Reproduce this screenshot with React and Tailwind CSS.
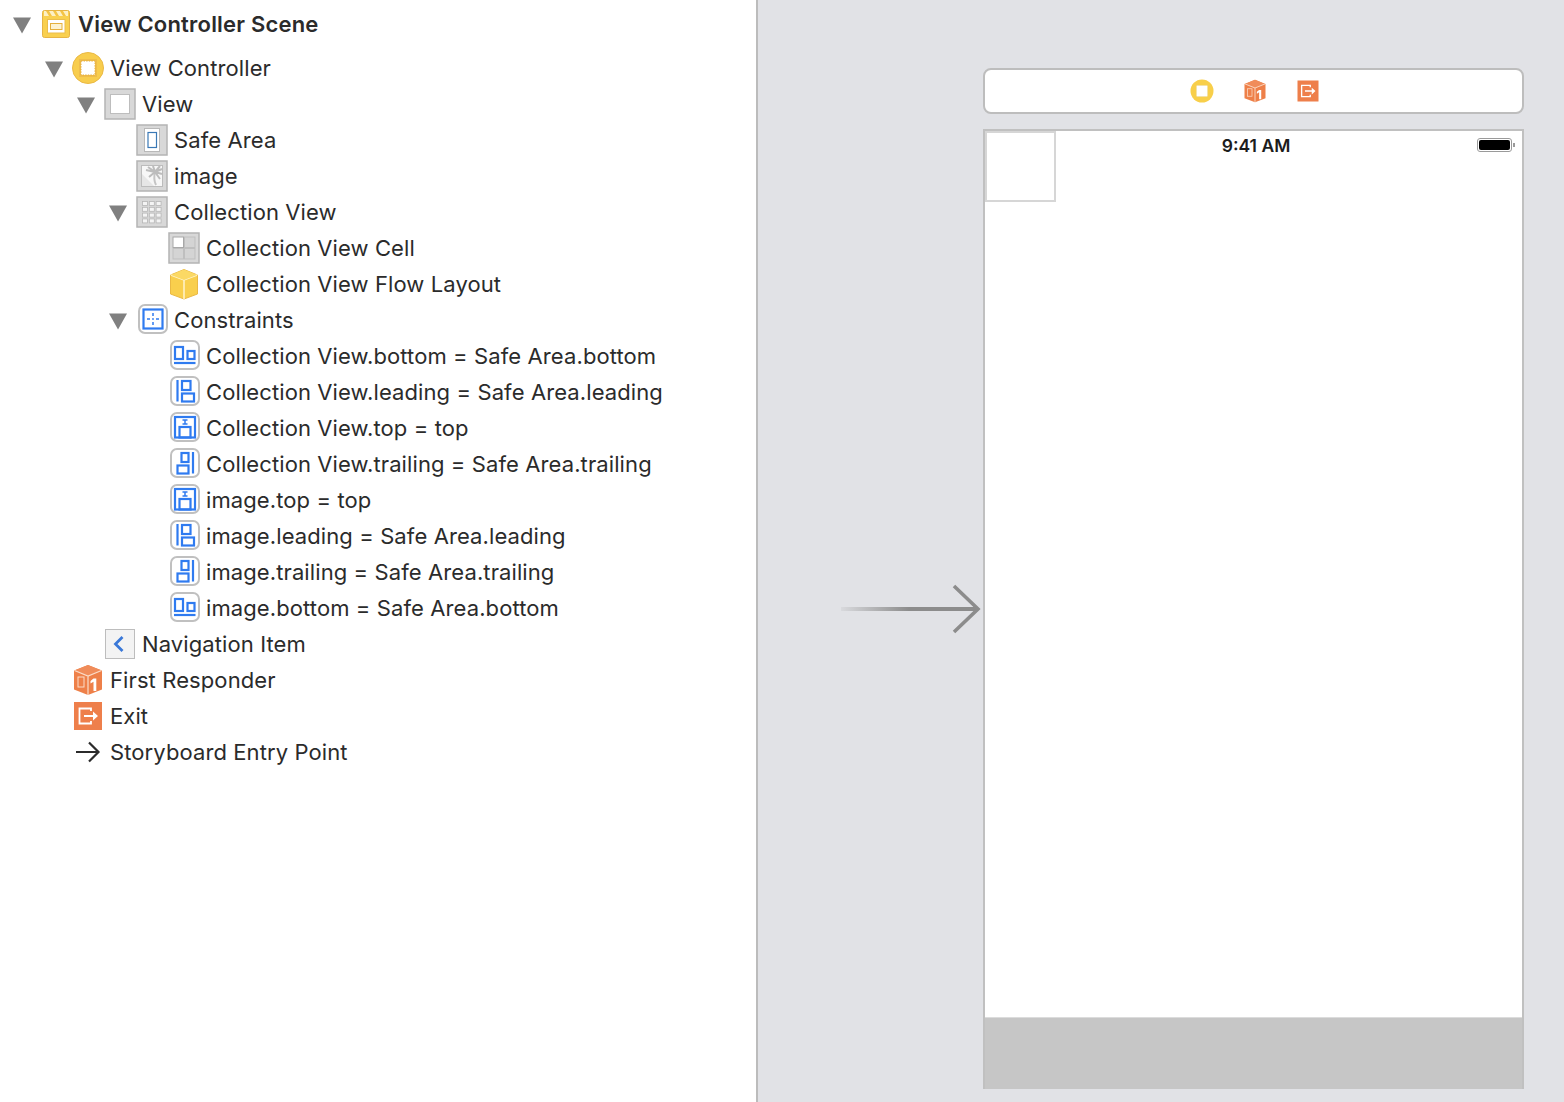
import { Fragment } from "react"

const BLUE = "#2f7bf0"
const FONT = "font-['Inter','Liberation_Sans',sans-serif]"

function Triangle() {
  return (
    <svg width="32" height="32" viewBox="0 0 32 32" className="shrink-0">
      <path d="M7 9.500h18l-9 16z" fill="#808080" />
    </svg>
  )
}

function GrayBox({ children }) {
  return (
    <svg width="32" height="32" viewBox="0 0 32 32">
      <rect x="1" y="1" width="30" height="30" fill="#d8d8d8" stroke="#b4b4b4" strokeWidth="1.500" />
      {children}
    </svg>
  )
}

function SceneIcon() {
  return (
    <svg width="32" height="32" viewBox="0 0 32 32">
      <rect x="2.500" y="2.500" width="27" height="27" rx="2" fill="#f9d04f" stroke="#e6b445" />
      <path d="M4 3h24v5H4z" fill="#fdf0c4" />
      <path d="M6 3l3 5h3L9 3zM13 3l3 5h3l-3-5zM20 3l3 5h3l-3-5z" fill="#f4c445" />
      <rect x="7.500" y="11.500" width="17.500" height="13.500" fill="#fff" stroke="#ebbd4c" />
      <rect x="10.500" y="15.500" width="11.500" height="6" fill="#fdf3d0" stroke="#e5b03c" />
    </svg>
  )
}

function ControllerIcon({ small }) {
  if (small) {
    return (
      <svg width="24" height="24" viewBox="0 0 24 24">
        <circle cx="12" cy="12" r="11.500" fill="#f8cf4a" />
        <rect x="6.500" y="6.500" width="11" height="11" rx="1" fill="#fff" stroke="#f3e2a8" />
      </svg>
    )
  }
  return (
    <svg width="32" height="32" viewBox="0 0 32 32">
      <circle cx="16" cy="16" r="15.500" fill="#f8cd4d" stroke="#eab945" />
      <rect x="7" y="7" width="18" height="18" fill="#efbd4b" />
      <rect x="9" y="9" width="14" height="14" fill="#fff" />
      <rect x="9" y="9" width="14" height="14" fill="none" stroke="#e5ad3c" strokeDasharray="1.400 1.200" />
    </svg>
  )
}

function ViewIcon() {
  return (
    <GrayBox>
      <rect x="6.500" y="6.500" width="19" height="19" fill="#fff" stroke="#bdbdbd" />
    </GrayBox>
  )
}

function SafeAreaIcon() {
  return (
    <GrayBox>
      <rect x="8.500" y="4.500" width="15" height="23" fill="#fff" stroke="#b8b8b8" />
      <rect x="12" y="8.500" width="8.500" height="15" fill="#fff" stroke="#3a78b5" strokeWidth="1.200" />
    </GrayBox>
  )
}

function ImageIcon() {
  return (
    <GrayBox>
      <rect x="5.500" y="5.500" width="21" height="21" fill="#f7f7f7" stroke="#bcbcbc" />
      <path d="M6 14l12 12H6z" fill="#e6e6e6" />
      <path d="M19 12c-1 4-1 9 1 13" fill="none" stroke="#c4c4c4" strokeWidth="2" />
      <path d="M19 12L10 10M19 12L12 7M19 12L17 6M19 12L24 6M19 12L26 9M19 12L26 14M19 12L24 19M19 12L13 17" fill="none" stroke="#bcbcbc" strokeWidth="2" />
    </GrayBox>
  )
}

function CollectionIcon() {
  const cells = []
  for (let r = 0; r < 4; r++) {
    for (let c = 0; c < 3; c++) {
      cells.push(<rect key={`${r}${c}`} x={6.500 + c * 6.800} y={5.500 + r * 5.800} width="5" height="4" fill="#f4f4f4" stroke="#b6b6b6" strokeWidth="0.800" />)
    }
  }
  return <GrayBox>{cells}</GrayBox>
}

function CellIcon() {
  return (
    <GrayBox>
      <rect x="5" y="5" width="10.500" height="10.500" fill="#fff" stroke="#a8a8a8" />
      <rect x="16.500" y="5" width="10.500" height="10.500" fill="#d4d4d4" stroke="#bfbfbf" />
      <rect x="5" y="16.500" width="10.500" height="10.500" fill="#d4d4d4" stroke="#bfbfbf" />
      <rect x="16.500" y="16.500" width="10.500" height="10.500" fill="#d4d4d4" stroke="#bfbfbf" />
    </GrayBox>
  )
}

function LayoutIcon() {
  return (
    <svg width="32" height="32" viewBox="0 0 32 32">
      <path d="M16 1.500L29.500 7v19L16 31 2.500 26V7z" fill="#f9cf4d" stroke="#eab945" />
      <path d="M3 7l13 5 13-5M16 12v19" fill="none" stroke="#fff4cc" strokeWidth="1.500" />
      <path d="M3 7l13-5.500L29 7l-13 5z" fill="#fbd964" />
    </svg>
  )
}

function ConstraintBox({ children }) {
  return (
    <svg width="32" height="32" viewBox="0 0 32 32">
      <rect x="3" y="1" width="28" height="28" rx="6" fill="#fff" stroke="#c0c0c0" strokeWidth="2" />
      <g fill="none" stroke={BLUE} strokeWidth="2.200">{children}</g>
    </svg>
  )
}

function ConstraintsIcon() {
  return (
    <svg width="32" height="32" viewBox="0 0 32 32">
      <rect x="3" y="1" width="28" height="28" rx="6" fill="#fff" stroke="#c0c0c0" strokeWidth="2" />
      <rect x="7.500" y="5.500" width="19" height="19" fill="none" stroke={BLUE} strokeWidth="2.200" />
      <path d="M17 9v3M17 18v3M11 15h3M20 15h3" stroke={BLUE} strokeWidth="1.500" />
      <circle cx="17" cy="15" r="0.900" fill={BLUE} />
    </svg>
  )
}

function BottomIcon() {
  return (
    <ConstraintBox>
      <rect x="7" y="7" width="8" height="12" />
      <rect x="19.500" y="11" width="7" height="8" />
      <path d="M6 23h21.500" />
    </ConstraintBox>
  )
}

function LeadingIcon() {
  return (
    <ConstraintBox>
      <path d="M9.500 4v21.500" />
      <rect x="14" y="5" width="8.500" height="9" />
      <rect x="14" y="17.500" width="12" height="8" />
    </ConstraintBox>
  )
}

function TopIcon() {
  return (
    <ConstraintBox>
      <rect x="7" y="5" width="20" height="20.500" />
      <path d="M14.500 8h5M17 8v4M14.500 12h5" strokeWidth="1.500" />
      <rect x="11.500" y="15" width="11" height="10.500" />
    </ConstraintBox>
  )
}

function TrailingIcon() {
  return (
    <ConstraintBox>
      <path d="M25 4v21.500" />
      <rect x="13.500" y="5" width="7" height="9" />
      <rect x="9.500" y="17.500" width="11" height="8" />
    </ConstraintBox>
  )
}

function BackIcon() {
  return (
    <svg width="32" height="32" viewBox="0 0 32 32">
      <rect x="1.500" y="1.500" width="29" height="29" fill="#f3f3f3" stroke="#bdbdbd" strokeWidth="1" />
      <path d="M18.500 9l-7 7 7 7" fill="none" stroke="#3a78d8" strokeWidth="2.800" />
    </svg>
  )
}

function CubeIcon({ size = 32 }) {
  return (
    <svg width={size} height={size} viewBox="0 0 32 32">
      <path d="M16 1l14 5.500v19L16 31 2 25.500V6.500z" fill="#ee8049" />
      <path d="M2.500 6.500L16 1l13.500 5.500L16 12z" fill="#f08c5a" />
      <path d="M2.500 6.500L16 12l13.500-5.500M16 12v19" fill="none" stroke="#fbdcc8" strokeWidth="1.200" />
      <rect x="6" y="13" width="6" height="10" fill="none" stroke="#fbdcc8" strokeWidth="1" />
      <path d="M18.500 17l3-2.500h2.800V27h-2.800V17.800l-3 1.700z" fill="#fff" />
    </svg>
  )
}

function ExitIcon({ size = 32 }) {
  return (
    <svg width={size} height={size} viewBox="0 0 32 32">
      <rect x="2" y="2" width="28" height="28" fill="#ee7f4b" />
      <path d="M19 11V8.500H7.500v15H19V21" fill="none" stroke="#fff" strokeWidth="1.800" />
      <path d="M12 15h9v-3.500l5 4.500-5 4.500V17h-9z" fill="#fff" />
    </svg>
  )
}

function EntryIcon() {
  return (
    <svg width="32" height="32" viewBox="0 0 32 32">
      <path d="M4 16h22M17 6.500l9.500 9.500-9.500 9.500" fill="none" stroke="#2b2b2b" strokeWidth="2.200" />
    </svg>
  )
}

const ROWS = [
  { level: 1, open: true, icon: ControllerIcon, label: "View Controller" },
  { level: 2, open: true, icon: ViewIcon, label: "View" },
  { level: 3, icon: SafeAreaIcon, label: "Safe Area" },
  { level: 3, icon: ImageIcon, label: "image" },
  { level: 3, open: true, icon: CollectionIcon, label: "Collection View" },
  { level: 4, icon: CellIcon, label: "Collection View Cell" },
  { level: 4, icon: LayoutIcon, label: "Collection View Flow Layout" },
  { level: 3, open: true, icon: ConstraintsIcon, label: "Constraints" },
  { level: 4, icon: BottomIcon, label: "Collection View.bottom = Safe Area.bottom" },
  { level: 4, icon: LeadingIcon, label: "Collection View.leading = Safe Area.leading" },
  { level: 4, icon: TopIcon, label: "Collection View.top = top" },
  { level: 4, icon: TrailingIcon, label: "Collection View.trailing = Safe Area.trailing" },
  { level: 4, icon: TopIcon, label: "image.top = top" },
  { level: 4, icon: LeadingIcon, label: "image.leading = Safe Area.leading" },
  { level: 4, icon: TrailingIcon, label: "image.trailing = Safe Area.trailing" },
  { level: 4, icon: BottomIcon, label: "image.bottom = Safe Area.bottom" },
  { level: 2, icon: BackIcon, label: "Navigation Item" },
  { level: 1, icon: CubeIcon, label: "First Responder" },
  { level: 1, icon: ExitIcon, label: "Exit" },
  { level: 1, icon: EntryIcon, label: "Storyboard Entry Point" },
]

function Row({ level, open, icon: Icon, label, bold }) {
  return (
    <div className="flex h-9 items-center" style={{ paddingLeft: 6 + level * 32 }}>
      <div className="h-8 w-8 shrink-0">{open && <Triangle />}</div>
      <div className="ml-[2px] h-8 w-8 shrink-0"><Icon /></div>
      <span className={bold ? "ml-[6px] whitespace-nowrap pt-px text-[22px] font-semibold tracking-[0.2px]" : "ml-[6px] whitespace-nowrap pt-px text-[22px] tracking-[0.1px]"}>
        {label}
      </span>
    </div>
  )
}

export default function App() {
  return (
    <div className={`flex h-[1102px] w-[1564px] overflow-hidden bg-[#e1e2e6] text-[#2b2b2b] ${FONT}`}>
      {/* outline */}
      <aside className="w-[758px] shrink-0 border-r-2 border-[#bcbcbc] bg-white pt-[6px]">
        <Row level={0} open icon={SceneIcon} label="View Controller Scene" bold />
        <div className="mt-2">
          {ROWS.map((row) => (
            <Fragment key={row.label + row.level + row.icon.name}>
              <Row {...row} />
            </Fragment>
          ))}
        </div>
      </aside>

      {/* canvas */}
      <main className="relative flex-1 pl-[225px] pt-[68px]">
        <svg width="150" height="56" viewBox="0 0 150 56" className="absolute left-[83px] top-[581px]">
          <defs>
            <linearGradient id="entryLine" x1="0" x2="1" y1="0" y2="0">
              <stop offset="0" stopColor="#8c8c8c" stopOpacity="0.100" />
              <stop offset="0.500" stopColor="#8c8c8c" />
            </linearGradient>
          </defs>
          <rect x="0" y="26" width="136" height="4" fill="url(#entryLine)" />
          <path d="M113 5l24 23-24 23" fill="none" stroke="#8c8c8c" strokeWidth="3.600" />
        </svg>

        <div className="flex h-[46px] w-[541px] items-center justify-center gap-[29px] rounded-lg border-2 border-[#bdbdbd] bg-white pl-[2px]">
          <ControllerIcon small />
          <CubeIcon size={24} />
          <ExitIcon size={24} />
        </div>

        <div className="relative mt-[15px] flex h-[960px] w-[541px] flex-col border-2 border-b-0 border-[#c0c0c0] bg-white">
          <div className="absolute left-0 top-0 h-[71px] w-[71px] border-2 border-[#d6d6d6]" />
          <div className="grid h-[886px] grid-cols-[1fr_auto_1fr] items-start pt-[6px]">
            <span />
            <span className="pl-[5px] text-[17.500px] font-semibold leading-[18px] text-[#1c1c1c]">9:41 AM</span>
            <div className="flex items-center justify-end pr-[7px] pt-[1px]">
              <div className="flex h-[14px] w-[35px] items-center justify-center rounded-[3px] border border-[#9a9a9a]">
                <div className="h-[10px] w-[31px] rounded-[2px] bg-black" />
              </div>
              <div className="ml-px h-1 w-[2px] bg-[#9a9a9a]" />
            </div>
          </div>
          <div className="flex-1 border-t border-[#dcdcdc] bg-[#c6c6c6]" />
        </div>
      </main>
    </div>
  )
}
